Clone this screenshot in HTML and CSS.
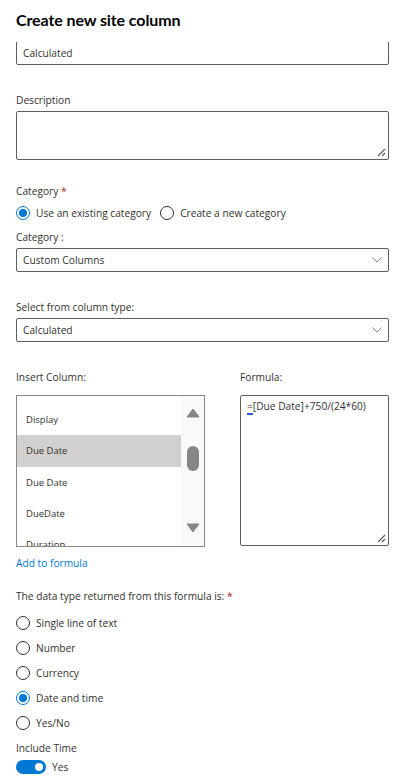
FILE: index.html
```html
<!DOCTYPE html>
<html lang="en">

<head>
    <meta charset="UTF-8">
    <meta name="viewport" content="width=device-width, initial-scale=1.0">
    <title>Create new site column</title>
    <link rel="stylesheet" href="styles.css">
</head>

<body>
    <div class="panel">
        <div class="panel-head">
            <h1>Create new site column</h1>
        </div>
        <div class="panel-view">
            <div class="panel-body">
                <!-- name field, scrolled partly under the header -->
                <div class="field field-first">
                    <div class="textbox">Calculated</div>
                </div>

                <div class="field field-desc">
                    <p class="label">Description</p>
                    <div class="textarea desc-area">
                        <svg class="grip" width="9" height="9" viewBox="0 0 9 9">
                            <path d="M1 8 L8 1 M5 8 L8 5" stroke="#605e5c" stroke-width="1.2" fill="none" />
                        </svg>
                    </div>
                </div>

                <div class="field field-cat">
                    <p class="label">Category <span class="req">*</span></p>
                    <div class="radio-inline">
                        <div class="radio checked"><span class="dot"></span>Use an existing category</div>
                        <div class="radio"><span class="dot"></span>Create a new category</div>
                    </div>
                    <p class="label sub-label">Category :</p>
                    <div class="select">
                        <span>Custom Columns</span>
                        <svg width="10" height="6" viewBox="0 0 10 6">
                            <path d="M0.5 0.5 L5 5 L9.5 0.5" stroke="#8a8886" fill="none" />
                        </svg>
                    </div>
                </div>

                <div class="field field-type">
                    <p class="label">Select from column type:</p>
                    <div class="select">
                        <span>Calculated</span>
                        <svg width="10" height="6" viewBox="0 0 10 6">
                            <path d="M0.5 0.5 L5 5 L9.5 0.5" stroke="#8a8886" fill="none" />
                        </svg>
                    </div>
                </div>

                <div class="formula-row">
                    <div class="col">
                        <p class="label col-label">Insert Column:</p>
                        <div class="listbox">
                            <ul class="list">
                                <li>Display</li>
                                <li class="active">Due Date</li>
                                <li>Due Date</li>
                                <li>DueDate</li>
                                <li>Duration</li>
                            </ul>
                            <div class="scrollbar">
                                <svg class="arrow-up" width="14" height="10" viewBox="0 0 14 10">
                                    <path d="M7 1 L13 9 L1 9 Z" fill="#868686" stroke="#868686" stroke-linejoin="round" />
                                </svg>
                                <div class="thumb"></div>
                                <svg class="arrow-down" width="14" height="10" viewBox="0 0 14 10">
                                    <path d="M1 1 L13 1 L7 9 Z" fill="#868686" stroke="#868686" stroke-linejoin="round" />
                                </svg>
                            </div>
                        </div>
                    </div>
                    <div class="col">
                        <p class="label col-label">Formula:</p>
                        <div class="textarea formula-area">
                            <span class="caret-mark">=</span>[Due Date]+750/(24*60)
                            <svg class="grip" width="9" height="9" viewBox="0 0 9 9">
                                <path d="M1 8 L8 1 M5 8 L8 5" stroke="#605e5c" stroke-width="1.2" fill="none" />
                            </svg>
                        </div>
                    </div>
                </div>

                <a class="link" href="#">Add to formula</a>

                <div class="field field-return">
                    <p class="label">The data type returned from this formula is: <span class="req">*</span></p>
                    <div class="radio-list">
                        <div class="radio"><span class="dot"></span>Single line of text</div>
                        <div class="radio"><span class="dot"></span>Number</div>
                        <div class="radio"><span class="dot"></span>Currency</div>
                        <div class="radio checked"><span class="dot"></span>Date and time</div>
                        <div class="radio"><span class="dot"></span>Yes/No</div>
                    </div>
                </div>

                <div class="field field-time">
                    <p class="label">Include Time</p>
                    <div class="toggle-row">
                        <span class="toggle"><span class="knob"></span></span>
                        <span>Yes</span>
                    </div>
                </div>
            </div>
        </div>
    </div>
</body>

</html>
```

FILE: styles.css
```css
* {
    margin: 0;
    padding: 0;
    list-style: none;
    box-sizing: border-box;
}

body {
    font-family: "Open Sans", "Noto Sans", sans-serif;
    font-size: 10.2px;
    color: #323130;
    background: #fff;
}

.panel {
    width: 404px;
    height: 777px;
    display: flex;
    flex-direction: column;
}

.panel-head {
    height: 42px;
    padding: 9px 16px 0;
    flex-shrink: 0;
    background: #fff;
}

.panel-head h1 {
    font-family: Lato, "Open Sans", sans-serif;
    font-size: 16px;
    line-height: 22px;
    font-weight: 700;
    letter-spacing: -0.1px;
    color: #000;
}

.panel-view {
    flex: 1;
    overflow: hidden;
}

.panel-body {
    padding: 0 15px 0 16px;
    margin-top: -1px;
}

.label {
    line-height: 16px;
    margin-bottom: 3px;
}

.req {
    color: #a4262c;
}

.field-desc,
.field-type {
    margin-top: 27px;
}

.field-cat {
    margin-top: 23px;
}

.textbox,
.select {
    height: 24px;
    border: 1px solid #605e5c;
    border-radius: 2px;
    padding: 0 6px;
    line-height: 22px;
}

.select {
    display: flex;
    align-items: center;
    justify-content: space-between;
}

.textarea {
    position: relative;
    border: 1px solid #605e5c;
    border-radius: 2px;
}

.desc-area {
    height: 49px;
}

.grip {
    position: absolute;
    right: 2px;
    bottom: 2px;
}

.radio-inline {
    display: flex;
    margin-top: 6px;
    height: 16px;
    align-items: center;
}

.radio {
    display: flex;
    align-items: center;
    margin-right: 9px;
}

.radio .dot {
    width: 14px;
    height: 14px;
    border: 1px solid #323130;
    border-radius: 50%;
    margin-right: 6px;
    display: flex;
    align-items: center;
    justify-content: center;
}

.radio.checked .dot {
    border-color: #0078d4;
}

.radio.checked .dot::after {
    content: "";
    width: 8px;
    height: 8px;
    border-radius: 50%;
    background: #0078d4;
}

.sub-label {
    margin-top: 8px;
}

.formula-row {
    display: grid;
    grid-template-columns: 189px 149px;
    column-gap: 35px;
    margin-top: 27px;
}

.col-label {
    margin-bottom: 10px;
}

.listbox {
    height: 152px;
    border: 1px solid #8a8886;
    display: flex;
    overflow: hidden;
}

.list {
    flex: 1;
    padding-top: 8px;
}

.list li {
    height: 31.3px;
    line-height: 31px;
    padding-left: 9px;
    font-size: 9.5px;
}

.list li.active {
    background: #d2d0ce;
}

.scrollbar {
    width: 23px;
    flex-shrink: 0;
    background: #fafafa;
    display: flex;
    flex-direction: column;
    align-items: center;
}

.arrow-up {
    margin-top: 12px;
}

.thumb {
    width: 12px;
    height: 25px;
    border-radius: 6px;
    background: #868686;
    margin-top: 28px;
}

.arrow-down {
    margin-top: 52px;
}

.formula-area {
    height: 151px;
    padding: 2px 6px;
    line-height: 16px;
}

.caret-mark {
    border-bottom: 2px solid #2a5ce6;
}

.link {
    display: block;
    margin-top: 8px;
    line-height: 16px;
    color: #0078d4;
    text-decoration: none;
}

.field-return {
    margin-top: 17px;
}

.radio-list {
    margin-top: 6px;
}

.radio-list .radio {
    height: 25px;
}

.field-time {
    margin-top: 5px;
}

.toggle-row {
    display: flex;
    align-items: center;
    height: 16px;
    margin-top: 3px;
}

.toggle {
    width: 30px;
    height: 14px;
    border-radius: 7px;
    background: #0078d4;
    display: flex;
    align-items: center;
    justify-content: flex-end;
    padding-right: 3px;
    margin-right: 6px;
}

.knob {
    width: 8px;
    height: 8px;
    border-radius: 50%;
    background: #fff;
}
```
